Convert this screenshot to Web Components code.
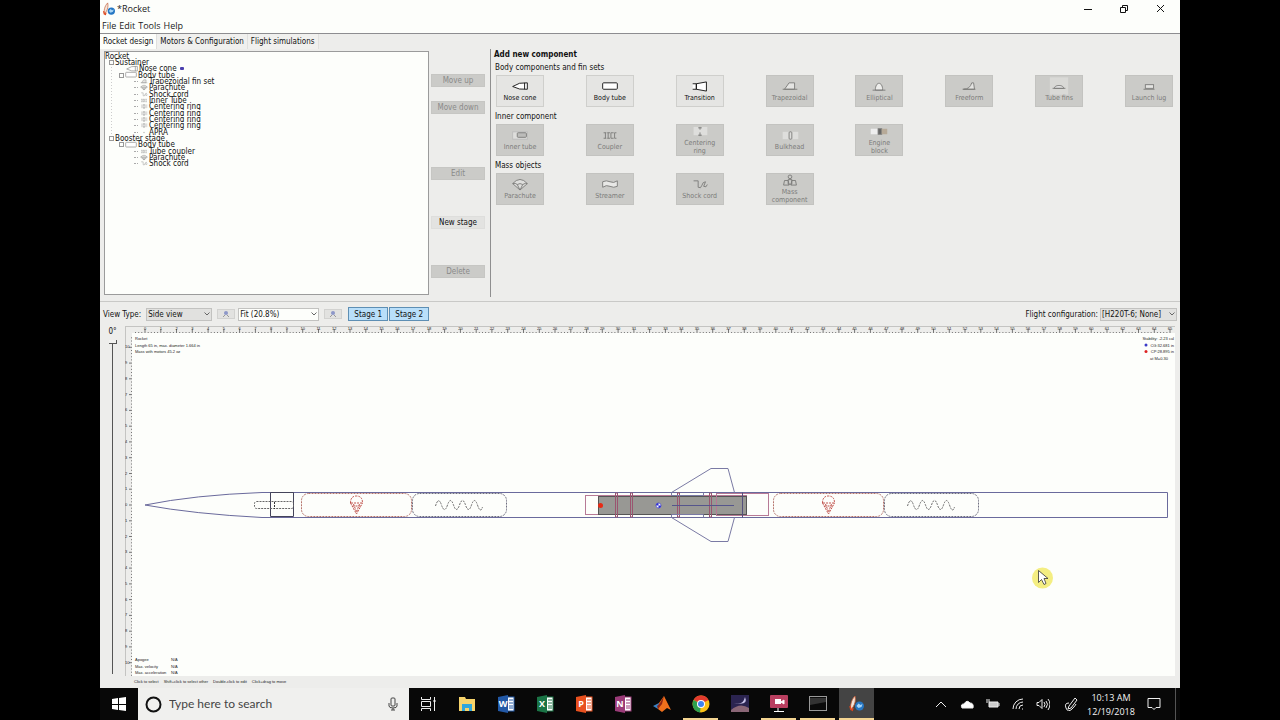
<!DOCTYPE html>
<html lang="en">
<head>
<meta charset="utf-8">
<title>*Rocket</title>
<style>
    html, body {
        margin: 0;
        height: 100%;
        background: #000;
        overflow: hidden;
    }

    body {
        display: flex;
        justify-content: center;
    }
</style>
</head>
<body>
<rocket-desktop></rocket-desktop>

<script>
// ---------- icons ----------
const ROCKET_ICON = `
    <path d="M3 15C2 11 3 5 7 1c1 4 0 8-2 11z" fill="#f3e3d8" stroke="#c05a35" stroke-width=".8"/>
    <path d="M3 15l-1 -4M5 13l-1 3" stroke="#e0451c" stroke-width="1.5"/>
    <circle cx="11.500" cy="11" r="4.500" fill="#2677c4"/>
    <path d="M8.500 11l2-2.500 2 1.500 2-1-1 3-3 1z" fill="#a8d4f5"/>`;

const PART_ICONS = {
    nose: '<path d="M1 6Q8 1 17 2v7Q8 10 1 6z" fill="#fff"/><path d="M14 2v7"/>',
    tube: '<rect x="1" y="2" width="16" height="7" rx="1" fill="#fff"/>',
    transition: '<path d="M1 3h4v6H1M5 3l11-2v10L5 9z" fill="#fff"/>',
    trapezoid: '<path d="M3 9l5-7h6v7z" fill="#e4e4e2"/><path d="M1 9h16"/>',
    ellipse: '<path d="M5 10C5 0 13 0 13 10z" fill="#ededeb"/><path d="M2 10h14"/>',
    freeform: '<path d="M3 9q7 0 9-7h2l1 7z" fill="#e4e4e2"/><path d="M2 9h14"/>',
    tubefin: '<rect x="-1" y="-4" width="20" height="19" fill="#d9d9d6" stroke="none"/><path d="M4 8q0-3 5-3t5 3z" fill="#eee"/><path d="M2 8h14"/>',
    lug: '<path d="M3 9h12"/><rect x="5" y="4" width="9" height="4" fill="#e4e4e2"/>',
    inner: '<rect x="1" y="2" width="16" height="8" fill="#dededc" stroke="#bbb"/><rect x="6" y="3" width="10" height="5" rx="1" fill="#bcbcba"/>',
    coupler: '<path d="M2 3h14M2 9h14" stroke-dasharray="3 1"/><path d="M4 3v6M7 3v6M10 3v6M14 3v6"/>',
    ring: '<rect x="2" y="1" width="15" height="9" fill="#dededc" stroke="none"/><path d="M9 1v3M9 7v4M7 2h4M7 10h4"/>',
    bulkhead: '<rect x="1" y="2" width="17" height="8" fill="#dededc" stroke="none"/><rect x="8" y="2" width="3" height="8" rx="1"/>',
    engine: '<rect x="0" y="3" width="8" height="6" fill="#eee" stroke="none"/><rect x="8" y="3" width="4" height="6" fill="#666"/><rect x="12" y="3" width="6" height="6" fill="#b7aa98" stroke="none"/>',
    parachute: '<path d="M1 5Q9-4 17 5L9 12z" fill="#dededc"/><path d="M1 5q3-1 5 1 3-2 6 0 3-2 5-1M6 6l3 6 3-6"/>',
    streamer: '<path d="M1 3q4-2 8 0t8-1v6q-4 2-8 0t-8 1z" fill="#e8e8e6"/>',
    shock: '<path d="M2 2h5v7q3 2 4-2t4-4l-2 5q3 2 4-2"/>',
    mass: '<circle cx="9" cy="2" r="2"/><path d="M3 6h4l1 5H2zM11 6h4l1 5h-6zM7 5h4v5H7z"/>',
    // small tree only
    apra: '<circle cx="9" cy="6" r="1"/>'
};

function partIcon(name, width = 18, height = 12) {
    return `<svg viewBox="0 0 18 12" width="${width}" height="${height}" fill="none"
        stroke="currentColor" stroke-width="1" overflow="visible" aria-hidden="true">${PART_ICONS[name] || ''}</svg>`;
}

function define(name, html, init) {
    customElements.define(name, class extends HTMLElement {
        constructor() {
            super();
            this.attachShadow({ mode: 'open' });
        }

        connectedCallback() {
            this.shadowRoot.innerHTML = typeof html === 'function' ? html(this) : html;
            if (init) init(this.shadowRoot, this);
        }
    });
}

// ---------- window chrome ----------
define('title-bar', `
    <style>
        :host {
            display: flex;
            align-items: center;
            height: 18px;
            padding: 0 2px;
            background: #fdfefb;
            font: 9px/18px "Open Sans", sans-serif;
            color: #222;
        }
        .name { flex: 1; margin-left: 2px; }
        button {
            display: grid;
            place-items: center;
            width: 36px;
            height: 18px;
            padding: 0;
            border: 0;
            background: none;
            color: #111;
        }
    </style>
    <svg width="13" height="14" viewBox="0 0 16 17" fill="none">${ROCKET_ICON}</svg>
    <span class="name">*Rocket</span>
    <button aria-label="Minimize"><svg width="9" height="9" stroke="currentColor"><path d="M0 4.500h8"/></svg></button>
    <button aria-label="Restore"><svg width="9" height="9" stroke="currentColor" fill="none"><path d="M.5 2.500h5v5h-5zM2.500 2.500v-2h5v5h-2"/></svg></button>
    <button aria-label="Close"><svg width="9" height="9" stroke="currentColor"><path d="M1 0l7 7M8 0l-7 7"/></svg></button>
`);

define('menu-bar', `
    <style>
        :host {
            display: flex;
            gap: 3px;
            height: 15px;
            padding-left: 2px;
            background: #fdfefb;
        }
        button {
            padding: 0;
            border: 0;
            background: none;
            font: 9px/15px "Open Sans", sans-serif;
            color: #222;
        }
    </style>
    <button>File</button><button>Edit</button><button>Tools</button><button>Help</button>
`);

define('tab-bar', `
    <style>
        :host {
            display: flex;
            height: 15px;
            border-top: 1px solid #8d8d90;
            background: #ededeb;
        }
        button {
            padding: 0 3px;
            border: 0;
            border-right: 1px solid #e0e0de;
            background: #f0f0ee;
            font: inherit;
            color: #111;
        }
        button[aria-selected=true] { background: #fdfefb; }
    </style>
    <div role="tablist" style="display:flex">
        <button role="tab" aria-selected="true">Rocket design</button>
        <button role="tab">Motors &amp; Configuration</button>
        <button role="tab">Flight simulations</button>
    </div>
`);

// ---------- component tree ----------
const TREE = [
    [0, '', 'Rocket'],
    [1, '', 'Sustainer'],
    [2, 'nose', 'Nose cone', 'mark'],
    [2, 'tube', 'Body tube', 'open'],
    [3, 'trapezoid', 'Trapezoidal fin set'],
    [3, 'parachute', 'Parachute'],
    [3, 'shock', 'Shock cord'],
    [3, 'coupler', 'Inner Tube'],
    [3, 'ring', 'Centering ring'],
    [3, 'ring', 'Centering ring'],
    [3, 'ring', 'Centering ring'],
    [3, 'ring', 'Centering ring'],
    [3, 'apra', 'APRA'],
    [1, '', 'Booster stage'],
    [2, 'tube', 'Body tube', 'open'],
    [3, 'coupler', 'Tube coupler'],
    [3, 'parachute', 'Parachute'],
    [3, 'shock', 'Shock cord']
];

function treeRow([level, icon, label, flag]) {
    const box = level === 1 || flag === 'open' ? '<i class="box"></i>' : '';
    return `<li class="l${level}" role="treeitem" aria-level="${level + 1}">${box}
        ${icon ? partIcon(icon, level === 2 ? 12 : 8, level === 2 ? 8 : 5) : ''}
        <span>${label}</span>${flag === 'mark' ? '<b></b>' : ''}</li>`;
}

define('component-tree', `
    <style>
        :host {
            display: block;
            border: 1px solid #9b9b9b;
            background: #fdfefb;
            color: #111;
        }
        ul {
            display: grid;
            grid-auto-rows: 1fr;
            height: 114px;
            margin: 1px 0 0;
            padding: 0;
            background: repeating-linear-gradient(#ccc 0 1px, transparent 1px 3px) 6px 14px / 1px 70px no-repeat;
            list-style: none;
        }
        li {
            display: flex;
            align-items: center;
            height: 0;
            place-self: center stretch;
            line-height: 7px;
        }
        span { background: #fdfefb; }
        svg { margin-right: 1px; color: #888; }
        .l1 { padding-left: 4px; }
        .l2 { padding-left: 21px; }
        .l3 { padding-left: 35px; }
        .l2:has(.box) { padding-left: 14px; }
        .l3::before {
            content: "";
            width: 4px;
            margin-left: -6px;
            margin-right: 2px;
            border-top: 1px dotted #aaa;
        }
        .box {
            width: 3px;
            height: 3px;
            margin-right: 1px;
            border: 1px solid #999;
        }
        b {
            width: 4px;
            height: 3px;
            margin-left: 3px;
            border-radius: 1px;
            background: #4a3fae;
        }
    </style>
    <ul role="tree" aria-label="Rocket components">${TREE.map(treeRow).join('')}</ul>
`);

define('tree-actions', `
    <style>
        :host {
            display: grid;
            grid-template-rows: 27px 66px 49px 49px 13px;
            align-content: start;
            padding-top: 23px;
        }
        button {
            height: 13px;
            padding: 0;
            border: 1px solid #dededc;
            background: #e3e3e1;
            font: inherit;
            line-height: 11px;
            color: #111;
        }
        button:disabled {
            border-color: #c6c6c3;
            background: #cbcbc8;
            color: #8a8a88;
        }
    </style>
    <button disabled>Move up</button>
    <button disabled>Move down</button>
    <button disabled>Edit</button>
    <button>New stage</button>
    <button disabled>Delete</button>
`);

// ---------- palette ----------
define('part-button', el => `
    <style>
        :host { display: block; }
        button {
            display: flex;
            flex-direction: column;
            align-items: center;
            justify-content: center;
            gap: 2px;
            width: 48px;
            height: 32px;
            padding: 0;
            border: 1px solid #cfcfcc;
            background: #e5e5e3;
            font: inherit;
            font-size: 7px;
            line-height: 8px;
            color: #111;
        }
        button:disabled {
            border-color: #c3c3c0;
            background: #cbcbc8;
            color: #7c7c7a;
        }
        svg { flex: none; }
    </style>
    <button ${el.hasAttribute('off') ? 'disabled' : ''}>${partIcon(el.getAttribute('icon'), 18, 11)}<span><slot></slot></span></button>
`);

define('part-group', el => `
    <style>
        :host { display: block; }
        h3 {
            margin: 0;
            font: inherit;
            line-height: 14px;
        }
        .row {
            display: grid;
            grid-template-columns: repeat(7, 1fr) 48px;
            padding-left: 1px;
        }
    </style>
    <h3>${el.getAttribute('label')}</h3>
    <div class="row"><slot></slot></div>
`);

define('part-palette', `
    <style>
        :host {
            display: flex;
            flex-direction: column;
            gap: 3px;
            padding: 0 7px 0 4px;
            border-left: 1px solid #8f8f8f;
            color: #111;
        }
        h2 {
            margin: 0 0 -3px -1px;
            font: inherit;
            font-weight: bold;
            line-height: 12px;
        }
    </style>
    <h2>Add new component</h2>
    <part-group label="Body components and fin sets">
        <part-button icon="nose">Nose cone</part-button>
        <part-button icon="tube">Body tube</part-button>
        <part-button icon="transition">Transition</part-button>
        <part-button icon="trapezoid" off>Trapezoidal</part-button>
        <part-button icon="ellipse" off>Elliptical</part-button>
        <part-button icon="freeform" off>Freeform</part-button>
        <part-button icon="tubefin" off>Tube fins</part-button>
        <part-button icon="lug" off>Launch lug</part-button>
    </part-group>
    <part-group label="Inner component">
        <part-button icon="inner" off>Inner tube</part-button>
        <part-button icon="coupler" off>Coupler</part-button>
        <part-button icon="ring" off>Centering<br>ring</part-button>
        <part-button icon="bulkhead" off>Bulkhead</part-button>
        <part-button icon="engine" off>Engine<br>block</part-button>
    </part-group>
    <part-group label="Mass objects">
        <part-button icon="parachute" off>Parachute</part-button>
        <part-button icon="streamer" off>Streamer</part-button>
        <part-button icon="shock" off>Shock cord</part-button>
        <part-button icon="mass" off>Mass<br>component</part-button>
    </part-group>
`);

// ---------- view toolbar ----------
define('drop-down', el => `
    <style>
        :host { display: grid; align-items: center; }
        select, svg { grid-area: 1 / 1; }
        select {
            appearance: none;
            height: 13px;
            padding: 0 12px 0 1px;
            border: 1px solid #c2c2c0;
            border-radius: 0;
            background: ${el.getAttribute('tone') || '#e1e1df'};
            font: inherit;
            line-height: 11px;
            color: #111;
        }
        svg {
            justify-self: end;
            margin-right: 2px;
            pointer-events: none;
        }
    </style>
    <select aria-label="${el.getAttribute('label')}"><option>${el.getAttribute('value')}</option></select>
    <svg width="6" height="4" fill="none" stroke="#666"><path d="M.5.500l2.500 2.500 2.500-2.500"/></svg>
`);

define('view-toolbar', `
    <style>
        :host {
            display: flex;
            align-items: center;
            height: 24px;
            padding: 0 3px;
            color: #111;
        }
        .type { width: 66px; margin-left: 5px; }
        .fit { width: 81px; }
        .config { width: 77px; margin-left: 2px; }
        .zoom {
            display: grid;
            place-items: center;
            width: 18px;
            height: 10px;
            margin: 0 3px 0 5px;
            padding: 0;
            border: 1px solid #d2d2d0;
            background: #e2e2e0;
        }
        .stage {
            width: 40px;
            height: 14px;
            padding: 0;
            margin-right: 1px;
            border: 1px solid #5e8fb4;
            background: #b9dffa;
            font: inherit;
            color: #111;
        }
        .stages { flex: 1; display: flex; margin-left: 3px; }
    </style>
    <span>View Type:</span>
    <drop-down class="type" label="View type" value="Side view"></drop-down>
    <button class="zoom" aria-label="Zoom out"><svg width="8" height="8"><path d="M1 7l2-2M5 5l2 2" stroke="#999"/><circle cx="4" cy="3" r="2" fill="#8d97c8"/></svg></button>
    <drop-down class="fit" label="Zoom" value="Fit (20.8%)" tone="#fdfefb"></drop-down>
    <button class="zoom" aria-label="Zoom in"><svg width="8" height="8"><path d="M1 7l2-2M5 5l2 2" stroke="#999"/><circle cx="4" cy="3" r="2" fill="#8d97c8"/></svg></button>
    <div class="stages"><button class="stage" aria-pressed="true">Stage 1</button><button class="stage" aria-pressed="true">Stage 2</button></div>
    <span>Flight configuration:</span>
    <drop-down class="config" label="Flight configuration" value="[H220T-6; None]"></drop-down>
`);

// ---------- rocket figure ----------
const INCH = 15.77;   // drawing units per inch
const ORIGIN_X = 20;
const ORIGIN_Y = 179;

function horizontalRuler() {
    let out = '';
    for (let i = -3; i <= 325; i++) {
        const x = ORIGIN_X + i * INCH / 5;
        const major = i % 5 === 0;
        out += `<path d="M${x.toFixed(1)} 7v-${major ? 4 : 1}"/>`;
        if (major) out += `<text x="${x.toFixed(1)}" y="3.500" text-anchor="middle">${i / 5}</text>`;
    }
    return out;
}

function verticalRuler() {
    let out = '';
    for (let i = -53; i <= 54; i++) {
        const y = ORIGIN_Y + i * INCH / 5;
        const major = i % 5 === 0;
        out += `<path d="M7 ${y.toFixed(1)}h-${major ? 3 : 1}"/>`;
        if (major) out += `<text x="0" y="${(y + 1).toFixed(1)}">${Math.abs(i / 5)}</text>`;
    }
    return out;
}

function recovery(x) {
    return `<g transform="translate(${x} 0)" stroke-dasharray="2 1">
        <rect x="0" y="-11.500" width="110" height="23" rx="7" stroke="#b5746c"/>
        <rect x="111" y="-11.500" width="94" height="23" rx="7" stroke="#6f6f80"/>
        <path d="M49-2Q49-9 55-9T61-2zM49-2l6 11 6-11M52-1l3 8 3-8M51 1h8" stroke="#c0504a"/>
        <path d="M134 1Q137-9 140 0T146 0Q149-9 152 0T158 0Q161-9 164 0T170 0Q173-9 176 0T181 2" stroke="#6f6f6f"/>
    </g>`;
}

define('rocket-figure', `
    <style>
        :host { display: block; }
        svg { display: block; width: 100%; height: auto; }
        text { font: 4px "Liberation Sans", sans-serif; fill: #222; }
        .ruler path { stroke: #444; stroke-width: .7; }
    </style>
    <svg viewBox="0 0 1050 350" fill="none">
        <rect width="1050" height="350" fill="#ededeb"/>
        <rect x="7" y="7" width="1043" height="343" fill="#fdfefb"/>
        <path d="M0 .5h1050M.5 0v350" stroke="#c4c4c2"/>
        <g class="ruler">${horizontalRuler()}${verticalRuler()}</g>

        <text x="10" y="14">Rocket</text>
        <text x="10" y="20.500">Length 65 in, max. diameter 1.664 in</text>
        <text x="10" y="27">Mass with motors 45.2 oz</text>
        <text x="1049" y="14" text-anchor="end">Stability: -2.23 cal</text>
        <text x="1049" y="20.500" text-anchor="end">CG:32.681 in</text>
        <text x="1049" y="27" text-anchor="end">CP:28.895 in</text>
        <text x="1043" y="33.500" text-anchor="end">at M=0.30</text>
        <circle cx="1021" cy="19" r="1.500" fill="#3a3ac8"/>
        <circle cx="1021" cy="25.500" r="1.500" fill="#d22"/>
        <text x="10" y="335">Apogee</text><text x="46" y="335">N/A</text>
        <text x="10" y="341.500">Max. velocity</text><text x="46" y="341.500">N/A</text>
        <text x="10" y="348">Max. acceleration</text><text x="46" y="348">N/A</text>

        <g transform="translate(19 179)">
            <!-- airframe -->
            <g stroke="#6a6a9c">
                <path d="M127-12.500H118Q50-10 1 0 50 9 118 12.500H127"/>
                <path d="M126.500-12.500H1023.500V12.500H126.500"/>
            </g>
            <path d="M126.500-12.500h23v24h-23z" stroke="#44445a"/>
            <rect x="110.500" y="-3.500" width="39" height="7" rx="2" stroke="#666" stroke-dasharray="2 1"/>
            <path d="M130.500-3v7" stroke="#333" stroke-dasharray="2 1"/>
            ${recovery(157.5)}
            <!-- motor mount -->
            <rect x="441.500" y="-9.500" width="161" height="19" stroke="#b77a96"/>
            <rect x="454.500" y="-8.500" width="148" height="18" fill="#989894" stroke="#555"/>
            <path d="M471.500-12v24h2v-24zM486.500-12v24h2v-24zM533.500-12v24h2v-24zM565.500-12v24h2v-24z" stroke="#9a5570"/>
            <rect x="572.500" y="-11.500" width="52" height="22" stroke="#b77a96"/>
            <path d="M598.500-12.500v25" stroke="#55507c"/>
            <!-- fins -->
            <g stroke="#7a7aa4">
                <path d="M527.500-12.500L567-36.500h17l6.500 24M527.500-12.500v3h32v-3"/>
                <path d="M527.500 12.500L567 36.500h17l6.500-24M527.500 12.500v-3h32v3"/>
                <path d="M528 .5h62" stroke="#55558c"/>
            </g>
            ${recovery(629.5)}
            <circle cx="456.500" cy="0.500" r="2.500" fill="#e82a14"/>
            <circle cx="514.500" cy="0.500" r="2.500" fill="#fff" stroke="#2a2ad0" stroke-width=".6"/>
            <path d="M514.500.500v-2.500a2.500 2.500 0 0 0-2.500 2.500zh2.500a2.500 2.500 0 0 1-2.500 2.500z" fill="#2a2ad0"/>
        </g>

        <!-- pointer -->
        <circle cx="917.500" cy="252" r="10.500" fill="#f4ee82"/>
        <path d="M913.500 244.500v12l3-3 2.500 5 2-1-2-5h4z" fill="#fff" stroke="#333" stroke-width=".8"/>
    </svg>
`);

define('rotation-slider', `
    <style>
        :host {
            display: flex;
            flex-direction: column;
            align-items: center;
            width: 25px;
            color: #111;
        }
        label { line-height: 11px; }
        input {
            flex: 1;
            appearance: none;
            writing-mode: vertical-lr;
            width: 9px;
            min-height: 0;
            margin: 3px 0 2px;
            background: linear-gradient(#555, #555) center / 1px 100% no-repeat;
        }
        input::-webkit-slider-thumb {
            appearance: none;
            width: 8px;
            height: 4px;
            border: solid #555;
            border-width: 0 1px 1px 0;
            background: #f2f2f0;
        }
    </style>
    <label for="angle">0°</label>
    <input id="angle" type="range" min="0" max="360" value="0">
`);

// ---------- application ----------
define('rocket-app', `
    <style>
        :host {
            display: flex;
            flex-direction: column;
            background: #ededeb;
            font: 8px/13px "DejaVu Sans Condensed", "DejaVu Sans", sans-serif;
        }
        .design {
            flex: 1;
            display: grid;
            grid-template-columns: 325px 56px 1fr;
            column-gap: 2px;
            min-height: 0;
            padding: 2px 0 6px 4px;
        }
        tree-actions { padding-right: 2px; }
        part-palette { margin: -2px 0 -2px 1px; }
        .view { border-top: 1px solid #c9c9c7; }
        .figure {
            display: flex;
            padding-right: 5px;
        }
        rocket-figure { flex: 1; }
        footer {
            display: flex;
            gap: 5px;
            height: 12px;
            padding-left: 34px;
            font: 4px/11px "Liberation Sans", sans-serif;
            color: #222;
        }
    </style>
    <title-bar></title-bar>
    <menu-bar></menu-bar>
    <tab-bar></tab-bar>
    <div class="design">
        <component-tree></component-tree>
        <tree-actions></tree-actions>
        <part-palette></part-palette>
    </div>
    <div class="view">
        <view-toolbar></view-toolbar>
        <div class="figure">
            <rotation-slider></rotation-slider>
            <rocket-figure></rocket-figure>
        </div>
        <footer>
            <span>Click to select</span>
            <span>Shift+click to select other</span>
            <span>Double-click to edit</span>
            <span>Click+drag to move</span>
        </footer>
    </div>
`);

// ---------- taskbar ----------
function officeIcon(letter, color) {
    return `<rect x="9" y="2" width="8" height="14" fill="#fff" stroke="${color}"/>
        <path d="M12 5h4M12 8h4M12 11h4M12 13h4" stroke="${color}"/>
        <path d="M1 2l10-2v18L1 16z" fill="${color}"/>
        <text x="6" y="12" text-anchor="middle">${letter}</text>`;
}

const TASKS = [
    ['Task View', '<path d="M2.500 2v2.500h9V2M2.500 16v-2.500h9V16M2.500 6.500h9v5h-9zM15.500 2v14M14 6h3" stroke="#eee"/>'],
    ['File Explorer', '<path d="M1 2h6l1 2h9v12H1z" fill="#f6d36b"/><path d="M4 16V9h10v7h-3v-3H7v3z" fill="#2fa6dc"/>'],
    ['Word', officeIcon('W', '#2258a5')],
    ['Excel', officeIcon('X', '#1a7345')],
    ['PowerPoint', officeIcon('P', '#e8501e')],
    ['OneNote', officeIcon('N', '#9a3b78')],
    ['MATLAB', '<path d="M0 11l6-3 3 3-4 3z" fill="#3b82c4"/><path d="M6 8l5-7 7 14-4-2-5 4-4-3z" fill="#f0701c"/><path d="M11 1L9 9l-4 5-1-3 3-3z" fill="#8f2413"/>'],
    ['Chrome', '<circle cx="9" cy="9" r="8.500" fill="#fbc116"/><path d="M9 9L1.600 5A8.500 8.500 0 0 1 16.500 5z" fill="#e33b2e"/><path d="M9 9L1.600 5A8.500 8.500 0 0 0 8 17.500z" fill="#2da04e"/><circle cx="9" cy="9" r="4" fill="#fff"/><circle cx="9" cy="9" r="3" fill="#3f83ee"/>', 'running'],
    ['Stellarium', '<rect width="18" height="17" fill="#2b2450"/><path d="M0 15Q9 7 18 13v4H0z" fill="#8a6676"/><path d="M3 8Q12 11 14 2 18 11 3 8z" fill="#c9c4ea"/>'],
    ['Screen recorder', '<rect x="0" y="0" width="18" height="13" rx="1" fill="#b93f60"/><rect x="5" y="4" width="6" height="5" fill="#fff"/><path d="M11 7l3-2v4zM8 13v3M4 16.500h10" stroke="#fff" fill="#fff"/>', 'running'],
    ['Command Prompt', '<rect x=".5" y="1.500" width="17" height="14" fill="#0a0a0a" stroke="#999"/><path d="M1 3h16v4L1 10z" fill="#333"/>', 'running'],
    ['OpenRocket', ROCKET_ICON, 'running active']
];

const TRAY = [
    ['Show hidden icons', 26, '<path d="M2 10l5-5 5 5"/>'],
    ['OneDrive', 26, '<path d="M2 11q-2-4 2-4 3-5 6-1 4 0 3 5z" fill="#fff"/>'],
    ['Battery', 25, '<path d="M3 5h9v5H3zM13 6v3" fill="#ccc"/><path d="M1 2v4M3 2v3"/>'],
    ['Network', 25, '<path d="M2 12A10 10 0 0 1 12 2M5 12a7 7 0 0 1 7-7M8 12a4 4 0 0 1 4-4M11 12h1"/>'],
    ['Volume', 25, '<path d="M1 5.500h2l3-3v9l-3-3H1zM8 5q2 2 0 5M10 4q3 3 0 7M12 2q4 5 0 11"/>'],
    ['Pen', 31, '<path d="M11 1L5 9l-1 3 3-1 6-8zM5 6q-5 0-3 5t6 1 4-5"/>']
];

define('task-bar', `
    <style>
        :host {
            display: flex;
            height: 32px;
            background: #080808;
            font: 9px/14px "Open Sans", sans-serif;
            color: #f4f4f4;
        }
        button {
            display: grid;
            place-items: center;
            padding: 0;
            border: 0;
            background: none;
            color: inherit;
            font: inherit;
        }
        .start { width: 38px; }
        .search {
            display: flex;
            align-items: center;
            width: 271px;
            box-sizing: border-box;
            padding: 0 11px 0 7px;
            gap: 7px;
            background: #f0f0ee;
            color: #333;
        }
        .search input {
            flex: 1;
            min-width: 0;
            padding: 0;
            border: 0;
            outline: 0;
            background: none;
            font: 12px/16px Lato, sans-serif;
        }
        .search input::placeholder { color: #444; }
        .tasks {
            display: grid;
            grid-template-columns: repeat(12, 1fr);
            gap: 4px;
            width: 464px;
            margin-left: 1px;
        }
        .tasks button {
            box-sizing: border-box;
            border: solid transparent;
            border-width: 2px 0;
        }
        .tasks .running { border-bottom-color: #f3d491; }
        .tasks .active { background: #444; border-top-color: #444; }
        text { font: bold 9px "Open Sans", sans-serif; fill: #fff; }
        .tray {
            flex: 1;
            display: flex;
            justify-content: flex-end;
        }
        time {
            width: 50px;
            padding-top: 3px;
            text-align: center;
        }
        .notes { width: 35px; margin-right: 4px; }
        .peek { width: 4px; border-left: 1px solid #555; }
    </style>
    <button class="start" aria-label="Start"><svg width="14" height="14" fill="#fff"><path d="M0 2l6-1v6H0zM7 1l7-1v7H7zM0 8h6v5l-6-1zM7 8h7v6l-7-1z"/></svg></button>
    <div class="search">
        <svg width="17" height="17" fill="none"><circle cx="8.500" cy="8.500" r="7" stroke="#111" stroke-width="2"/></svg>
        <input type="text" placeholder="Type here to search" aria-label="Search">
        <svg width="10" height="14" fill="none" stroke="#444"><rect x="3" y="1" width="4" height="8" rx="1"/><path d="M1 6v3q0 2 4 2t4-2V6M5 11v2M3 13h4"/></svg>
    </div>
    <div class="tasks">${TASKS.map(([name, icon, state]) => `
        <button class="${state || ''}" aria-label="${name}"><svg width="18" height="18" viewBox="0 0 18 18" fill="none">${icon}</svg></button>`).join('')}
    </div>
    <div class="tray">${TRAY.map(([name, width, icon]) => `
        <button aria-label="${name}" style="width:${width}px"><svg width="14" height="14" fill="none" stroke="#eee">${icon}</svg></button>`).join('')}
        <time>10:13 AM<br>12/19/2018</time>
        <button class="notes" aria-label="Notifications"><svg width="14" height="14" fill="none" stroke="#eee"><path d="M1 1.500h12v9H9l-2 2-2-2H1z"/></svg></button>
        <div class="peek"></div>
    </div>
`);

define('rocket-desktop', `
    <style>
        :host {
            display: flex;
            flex-direction: column;
            height: 100vh;
            aspect-ratio: 3 / 2;
            max-width: 100%;
        }
        rocket-app { flex: 1; min-height: 0; }
    </style>
    <rocket-app></rocket-app>
    <task-bar></task-bar>
`);
</script>
</body>
</html>
